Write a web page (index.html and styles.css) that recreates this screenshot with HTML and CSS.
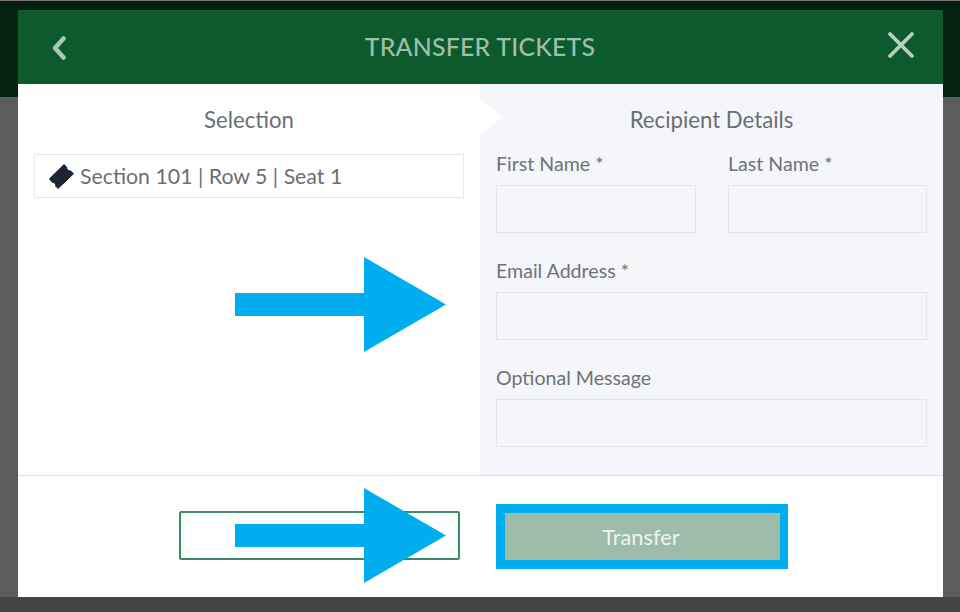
FILE: index.html
```html
<!DOCTYPE html>
<html lang="en">
<head>
<meta charset="utf-8">
<title>Transfer Tickets</title>
<link rel="stylesheet" href="styles.css">
</head>
<body>
<div class="modal">
  <header class="modal-head">
    <svg class="icon-back" viewBox="0 0 28 24" width="28" height="24"><path d="M12.500 2.500 4 12l8.500 9.500" fill="none" stroke="#a9c8b5" stroke-width="4.500" stroke-linecap="round" stroke-linejoin="round"/></svg>
    <h1 class="modal-title">TRANSFER TICKETS</h1>
    <svg class="icon-close" viewBox="0 0 28 28" width="28" height="28"><path d="M3 3 25 25M25 3 3 25" fill="none" stroke="#b5d0bf" stroke-width="3.800" stroke-linecap="round"/></svg>
  </header>
  <div class="modal-body">
    <section class="col-left">
      <h2 class="col-title">Selection</h2>
      <div class="seat-box">
        <svg class="ticket" viewBox="0 0 25 25" width="25" height="25"><path d="M15 .5 17.600 3Q17.500 6.500 21.800 7.100L24.500 9.800 9 24.500 6.600 22Q7 18.500 3 18L.5 14.800Z" fill="#1d2530" stroke="#1d2530" stroke-linejoin="round"/></svg>
        <span>Section 101 | Row 5 | Seat 1</span>
      </div>
    </section>
    <section class="col-right">
      <h2 class="col-title">Recipient Details</h2>
      <div class="fields">
        <div class="field"><span class="field-label">First Name *</span><div class="field-input"></div></div>
        <div class="field"><span class="field-label">Last Name *</span><div class="field-input"></div></div>
        <div class="field wide"><span class="field-label">Email Address *</span><div class="field-input"></div></div>
        <div class="field wide"><span class="field-label">Optional Message</span><div class="field-input"></div></div>
      </div>
    </section>
  </div>
  <footer class="modal-foot">
    <div class="btn-outline"></div>
    <div class="highlight"><div class="btn-primary">Transfer</div></div>
  </footer>
  <svg class="arrow arrow-top" viewBox="0 0 211 95" width="211" height="95"><path d="M0 36H129V0L211 47.500 129 95V59H0Z" fill="#00aeef"/></svg>
  <svg class="arrow arrow-bottom" viewBox="0 0 211 95" width="211" height="95"><path d="M0 36H129V0L211 47.500 129 95V59H0Z" fill="#00aeef"/></svg>
</div>
</body>
</html>
```
FILE: styles.css
```css
* { box-sizing: border-box; }
html, body { height: 100%; }
body {
  margin: 0;
  width: 960px;
  height: 612px;
  overflow: hidden;
  padding: 10px 17px 15px 18px;
  font-family: "Lato", "Noto Sans", sans-serif;
  color: #6b6f73;
  background: linear-gradient(#777 0, #777 1px, #04200f 1px, #04200f 97px, #5c5c5c 97px, #5c5c5c 597px, #444 597px);
}
.modal {
  position: relative;
  height: 587px;
  display: flex;
  flex-direction: column;
  background: #fff;
}
.modal-head {
  height: 74px;
  flex: none;
  display: flex;
  align-items: center;
  justify-content: space-between;
  padding: 0 27px 0 33px;
  background: #0d5a2c;
}
.icon-close { margin-top: -4px; margin-right: 1px; margin-left: -1px; }
.icon-back { margin-top: 2px; }
.modal-title {
  margin: 0 7px 2px 0;
  font-size: 24.800px;
  font-weight: 500;
  color: #9dbfaa;
  letter-spacing: .25px;
}
.modal-body {
  height: 391px;
  flex: none;
  display: flex;
}
.col-left {
  width: 462px;
  flex: none;
  padding: 0 16px;
}
.col-right {
  position: relative;
  flex: 1;
  padding: 0 16px;
  background: #f4f6fa;
}
.col-right::before {
  content: "";
  position: absolute;
  left: 0;
  top: 16px;
  border-left: 23px solid #fff;
  border-top: 17px solid transparent;
  border-bottom: 17px solid transparent;
}
.col-title {
  margin: 0;
  height: 70px;
  padding-top: 22px;
  font-size: 22.200px;
  line-height: 28px;
  font-weight: 400;
  text-align: center;
  color: #6b6f73;
}
.seat-box {
  height: 44px;
  display: flex;
  align-items: center;
  gap: 6px;
  padding-left: 14px;
  border: 1px solid #e6e7ea;
  font-size: 21.300px;
  background: #fff;
}
.fields {
  margin-top: -1px;
  display: grid;
  grid-template-columns: 200px 199px;
  justify-content: space-between;
  row-gap: 27px;
}
.field.wide { grid-column: 1 / -1; }
.field-label {
  display: block;
  height: 33px;
  font-size: 19.600px;
  line-height: 24px;
  color: #6f7377;
  margin-top: -1px;
}
.field-input {
  height: 48px;
  border: 1px solid #e3e5ea;
  background: #f4f6fa;
}
.modal-foot {
  flex: 1;
  display: flex;
  align-items: center;
  gap: 36px;
  padding-left: 161px;
  border-top: 1px solid #dfe0e2;
}
.btn-outline {
  width: 281px;
  height: 49px;
  margin-top: -2px;
  border: 2px solid #3f8a60;
  border-radius: 2px;
}
.highlight {
  width: 292px;
  height: 65px;
  padding: 9px 8px 9px 9px;
  background: #00aeef;
}
.btn-primary {
  height: 47px;
  display: flex;
  align-items: center;
  justify-content: center;
  padding-right: 3px;
  font-size: 21.800px;
  color: #eef4f0;
  background: #9dbca9;
}
.arrow { position: absolute; }
.arrow-top { left: 217px; top: 247px; }
.arrow-bottom { left: 217px; top: 478px; }
```
